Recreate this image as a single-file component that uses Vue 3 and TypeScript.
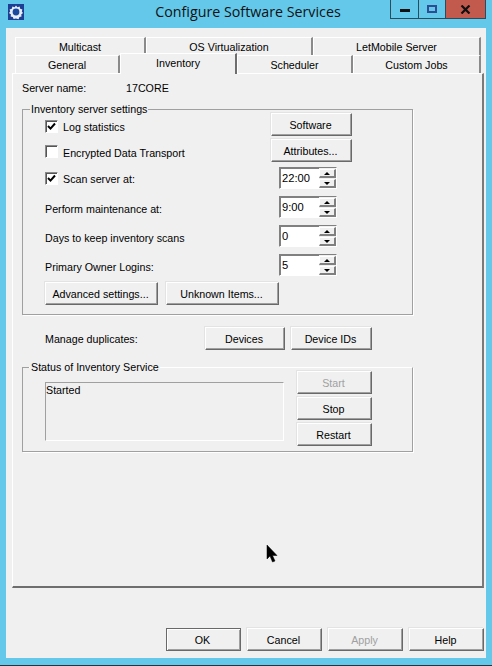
<script setup lang="ts">
interface Spin { value: string }
const topTabs = [
  { label: 'Multicast', width: 131 },
  { label: 'OS Virtualization', width: 167 },
  { label: 'LetMobile Server', width: 168 },
]
const bottomTabs = [
  { label: 'General', width: 105, active: false },
  { label: 'Inventory', width: 117, active: true },
  { label: 'Scheduler', width: 116, active: false },
  { label: 'Custom Jobs', width: 128, active: false },
]
const spin: Spin[] = [{ value: '22:00' }, { value: '9:00' }, { value: '0' }, { value: '5' }]
const footer = [
  { label: 'OK', cls: 'default' },
  { label: 'Cancel', cls: '' },
  { label: 'Apply', cls: 'disabled' },
  { label: 'Help', cls: '' },
]
</script>

<template>
  <div class="window">
    <header class="titlebar">
      <svg class="appicon" width="16" height="16" viewBox="0 0 16 16">
        <rect width="16" height="16" fill="#1c3f94" />
        <path d="M8 1.500l1.400 1.700 2.200-.6.600 2.200 2.200.6-.6 2.200L15 9l-1.800 1.400.4 2.200-2.200.5-.8 2.100L8 14.400 5.600 15l-.8-1.900-2.200-.5.4-2.200L1 9l1.200-1.400-.6-2.200 2.200-.6.600-2.200 2.200.6z" fill="#e8eef8" />
        <circle cx="8" cy="8" r="3.400" fill="#1a4a9f" />
      </svg>
      <span class="title">Configure Software Services</span>
      <div class="controls">
        <div class="ctl min"><i></i></div>
        <div class="ctl max"><i></i></div>
        <div class="ctl close">
          <svg width="11" height="9" viewBox="0 0 11 9"><path d="M1.500 0.500l8 8M9.500 0.500l-8 8" stroke="#111" stroke-width="2.200" fill="none" /></svg>
        </div>
      </div>
    </header>

    <main class="client">
      <div class="tabs">
        <div class="tabrow">
          <div v-for="t in topTabs" :key="t.label" class="tab" :style="{ width: t.width + 'px' }">{{ t.label }}</div>
        </div>
        <div class="tabrow second">
          <div v-for="t in bottomTabs" :key="t.label" class="tab" :class="{ active: t.active }" :style="{ width: t.width + 'px' }">{{ t.label }}</div>
        </div>
      </div>

      <section class="panel">
        <div class="server"><span class="server-label">Server name:</span><span>17CORE</span></div>

        <fieldset class="group settings">
          <legend>Inventory server settings</legend>
          <div class="form">
            <label class="check first"><span class="box"><svg width="11" height="11" viewBox="0 0 11 11"><path d="M2 5l2.500 2.600L9 2.500" stroke="#000" stroke-width="2" fill="none" /></svg></span>Log statistics</label>
            <button class="btn wide">Software</button>

            <label class="check second"><span class="box"></span><span class="nudge">Encrypted Data Transport</span></label>
            <button class="btn wide">Attributes...</button>

            <label class="check"><span class="box"><svg width="11" height="11" viewBox="0 0 11 11"><path d="M2 5l2.500 2.600L9 2.500" stroke="#000" stroke-width="2" fill="none" /></svg></span>Scan server at:</label>
            <div class="spin">
              <div class="spin-value">{{ spin[0].value }}</div>
              <div class="arrows"><div class="arrow up"></div><div class="arrow down"></div></div>
            </div>

            <div class="lbl">Perform maintenance at:</div>
            <div class="spin">
              <div class="spin-value">{{ spin[1].value }}</div>
              <div class="arrows"><div class="arrow up"></div><div class="arrow down"></div></div>
            </div>

            <div class="lbl">Days to keep inventory scans</div>
            <div class="spin">
              <div class="spin-value">{{ spin[2].value }}</div>
              <div class="arrows"><div class="arrow up"></div><div class="arrow down"></div></div>
            </div>

            <div class="lbl">Primary Owner Logins:</div>
            <div class="spin">
              <div class="spin-value">{{ spin[3].value }}</div>
              <div class="arrows"><div class="arrow up"></div><div class="arrow down"></div></div>
            </div>

            <div class="adv">
              <button class="btn adv-btn">Advanced settings...</button>
              <button class="btn adv-btn">Unknown Items...</button>
            </div>
          </div>
        </fieldset>

        <div class="dupes">
          <span class="dupes-label">Manage duplicates:</span>
          <button class="btn devices">Devices</button>
          <button class="btn device-ids">Device IDs</button>
        </div>

        <fieldset class="group status">
          <legend>Status of Inventory Service</legend>
          <div class="status-body">
            <div class="status-box">Started</div>
            <div class="status-btns">
              <button class="btn svc disabled">Start</button>
              <button class="btn svc">Stop</button>
              <button class="btn svc">Restart</button>
            </div>
          </div>
        </fieldset>
      </section>

      <footer class="footer">
        <button v-for="b in footer" :key="b.label" class="btn foot" :class="b.cls">{{ b.label }}</button>
      </footer>

      <svg class="cursor" width="12" height="20" viewBox="0 0 12 20">
        <path d="M1 1v14l3-3 2.500 6 2.500-1-2.500-5.500H11z" fill="#000" stroke="#000" stroke-width=".5" />
      </svg>
    </main>
  </div>
</template>

<style scoped>
.window {
  position: relative;
  width: 492px;
  height: 666px;
  box-sizing: border-box;
  background: #63c8ea;
  border-bottom: 1px solid #22343c;
  padding: 0 6px;
  font: 10.7px/14px "Liberation Sans", Arial, sans-serif;
  color: #000;
  overflow: hidden;
}
.titlebar {
  position: relative;
  height: 28px;
  display: flex;
  justify-content: center;
  align-items: center;
}
.appicon { position: absolute; left: 2px; top: 4px; }
.title {
  font: 14.25px/20px "Open Sans", sans-serif;
  color: #111;
  padding: 0 0 0 4px;
  margin-top: -4px;
}
.controls {
  position: absolute;
  right: 0;
  top: 0;
  display: flex;
  height: 19px;
  border: 1px solid #2f4a58;
  border-top: 0;
  box-sizing: border-box;
}
.ctl { display: flex; align-items: center; justify-content: center; box-sizing: border-box; }
.min { width: 28px; border-right: 1px solid #2f4a58; }
.min i { width: 10px; height: 3px; background: #111; margin-top: 3px; }
.max { width: 26px; }
.max i { width: 6px; height: 4px; border: 2px solid #2d4c92; margin-top: -1px; }
.close { width: 40px; background: #c25b4e; border-left: 1px solid #2f4a58; }
.client {
  position: relative;
  height: 630px;
  background: #f0f0f0;
  padding: 9px 0 0 6px;
  box-sizing: border-box;
}
.tabs { padding-left: 3px; }
.tabrow { display: flex; height: 18px; }
.tab {
  box-sizing: border-box;
  height: 18px;
  text-align: center;
  line-height: 18px;
  border-top: 1px solid #fff;
  border-left: 1px solid #fff;
  border-right: 2px solid #8a8a8a;
  background: #f0f0f0;
}
.tab.active {
  position: relative;
  z-index: 2;
  height: 21px;
  margin-top: -2px;
  line-height: 18px;
  border-right: 2px solid #6e6e6e;
}
.panel {
  position: relative;
  width: 472px;
  height: 515px;
  box-sizing: border-box;
  border-top: 1px solid #fff;
  border-left: 1px solid #fff;
  border-right: 2px solid #7a7a7a;
  border-bottom: 2px solid #6e6e6e;
  padding: 0 0 0 9px;
}
.server { height: 14px; padding-top: 7px; display: flex; }
.server-label { width: 104px; }
.group {
  width: 391px;
  box-sizing: border-box;
  margin: 0;
  padding: 0;
  min-width: 0;
  border: 1px solid #a0a0a0;
  box-shadow: 1px 1px 0 #fff;
}
.group legend {
  position: relative;
  margin-left: 7px;
  padding: 0 1px 0 1px;
  line-height: 14px;
  height: 14px;
}
.settings { margin-top: 7px; height: 213px; }
.form {
  display: grid;
  grid-template-columns: 226px 108px;
  grid-template-rows: 26px 28px 29px 29px 29px 28px 22px;
  align-items: start;
  margin-top: -3px;
  padding: 0 0 0 22px;
}
.check, .lbl {
  height: 22px;
  display: flex;
  align-items: center;
  box-sizing: border-box;
  padding-top: 1px;
}
.lbl { padding-top: 3px; }
.check.first { margin-top: 2px; }
.check.second { margin-top: 1px; }
.nudge { padding-top: 2px; }
.box {
  width: 13px;
  height: 13px;
  box-sizing: border-box;
  border: 1px solid;
  border-color: #8a8a8a #fff #fff #8a8a8a;
  box-shadow: inset 1px 1px 0 #555;
  background: #fff;
  margin-right: 5px;
  display: flex;
  align-items: center;
  justify-content: center;
}
.btn {
  font: inherit;
  color: #000;
  margin: 0;
  padding: 0 2px 0 0;
  height: 23px;
  box-sizing: border-box;
  background: #f0f0f0;
  border: 1px solid;
  border-color: #fff #696969 #696969 #fff;
  box-shadow: inset -1px -1px 0 #a0a0a0, -1px -1px 0 #e3e3e3;
}
.btn.disabled { color: #a0a0a0; }
.btn.wide { width: 81px; }
.spin {
  margin-left: 8px;
  width: 58px;
  height: 22px;
  box-sizing: border-box;
  display: flex;
  border: 1px solid;
  border-color: #808080 #fff #fff #808080;
  box-shadow: inset 1px 1px 0 #808080;
  background: #fff;
}
.spin-value { flex: 1; padding: 3px 0 0 2px; font-size: 11.2px; }
.arrows { width: 17px; display: flex; flex-direction: column; gap: 1px; padding-top: 1px; background: #f0f0f0; }
.arrow {
  position: relative;
  flex: 1;
  box-sizing: border-box;
  background: #f0f0f0;
  border: 1px solid;
  border-width: 1px 2px 2px 1px;
  border-color: #fff #808080 #808080 #fff;
}
.arrow::after {
  content: "";
  position: absolute;
  left: 4px;
  top: 2px;
  border-left: 3px solid transparent;
  border-right: 3px solid transparent;
}
.arrow.up::after { border-bottom: 3px solid #000; }
.arrow.down::after { border-top: 3px solid #000; }
.adv { grid-column: 1 / span 2; display: flex; gap: 8px; }
.adv-btn { width: 113px; }
.dupes { display: flex; align-items: center; margin-top: 12px; height: 23px; padding-left: 23px; }
.dupes-label { width: 160px; }
.devices { width: 80px; }
.device-ids { width: 81px; margin-left: 6px; }
.status {
  margin-top: 10px;
  height: 92px;
  border-top-color: #fff;
}
.status legend::before {
  content: "";
  position: absolute;
  left: -8px;
  top: 7px;
  width: 7px;
  height: 1px;
  background: #a0a0a0;
}
.status-body { display: flex; padding: 1px 0 0 22px; }
.status-box {
  width: 239px;
  height: 59px;
  box-sizing: border-box;
  margin-top: 7px;
  border: 1px solid;
  border-color: #a0a0a0 #fff #fff #a0a0a0;
  padding: 0;
}
.status-btns { display: flex; flex-direction: column; gap: 3px; margin-left: 13px; margin-top: -4px; }
.svc { width: 75px; }
.footer { display: flex; gap: 6px; margin-top: 40px; padding-left: 154px; }
.foot { width: 75px; }
.foot.default {
  border-color: #696969;
  box-shadow: inset 1px 1px 0 #fff, inset -1px -1px 0 #a0a0a0, inset 0 -1px 0 #696969;
}
.cursor { position: absolute; left: 260px; top: 516px; }
</style>
